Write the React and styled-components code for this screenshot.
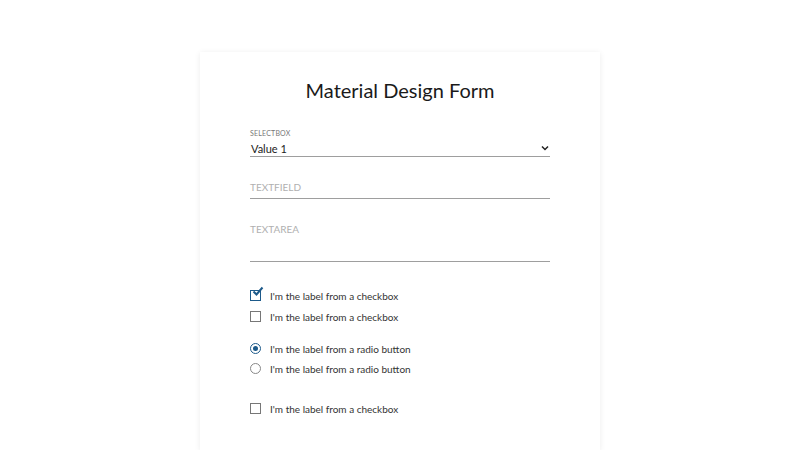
import React from 'react';
import styled, { createGlobalStyle } from 'styled-components';

const GlobalStyle = createGlobalStyle`
  html, body {
    margin: 0;
    padding: 0;
    background: #ffffff;
    font-family: Lato, "Open Sans", sans-serif;
    color: #222;
    overflow: hidden;
  }
`;

const Page = styled.div`
  display: flex;
  justify-content: center;
  padding-top: 52px;
  height: 450px;
  box-sizing: border-box;
`;

const Card = styled.form`
  width: 400px;
  padding: 20px 50px 40px;
  box-sizing: border-box;
  background: #fff;
  box-shadow: 0 1px 6px rgba(0, 0, 0, 0.08);
`;

const Title = styled.h1`
  margin: 0 0 20px;
  text-align: center;
  font-size: 20px;
  font-weight: 400;
  color: #1a1a1a;
  line-height: 36px;
`;

const Field = styled.div`
  display: flex;
  flex-direction: column;
  border-bottom: 1px solid #9e9e9e;
  margin-bottom: ${(p) => p.gap || 0}px;
`;

const SmallLabel = styled.span`
  font-size: 7px;
  color: #777;
  letter-spacing: 0.2px;
  line-height: 10px;
  margin-bottom: 3px;
`;

const SelectRow = styled.div`
  display: flex;
  align-items: center;
  justify-content: space-between;
  height: 14px;
  font-size: 11px;
  color: #222;
  padding: 0 1px 1px;
`;

const Placeholder = styled.span`
  font-size: 10px;
  color: #b0b0b0;
  line-height: 14px;
  height: ${(p) => p.h}px;
  padding-top: ${(p) => p.top}px;
`;

const Group = styled.div`
  display: flex;
  flex-direction: column;
  gap: ${(p) => p.inner || 7}px;
  margin-bottom: ${(p) => p.gap || 0}px;
`;

const Option = styled.label`
  display: flex;
  align-items: center;
  gap: 9px;
  font-size: 10px;
  color: #333;
  height: 13px;
`;

const Box = styled.span`
  position: relative;
  width: 9px;
  height: 9px;
  flex: none;
  border-style: solid;
  border-color: ${(p) => (p.checked ? '#1d5a8a' : '#777')};
  border-width: ${(p) => (p.checked ? '1.5px' : '1px')};
`;

const Tick = styled.svg`
  position: absolute;
  left: 1px;
  top: -5px;
`;

const Radio = styled.span`
  width: 9px;
  height: 9px;
  border-radius: 50%;
  border: 1px solid ${(p) => (p.checked ? '#1d5a8a' : '#888')};
  display: flex;
  align-items: center;
  justify-content: center;
  flex: none;
  &::after {
    content: '';
    width: 5px;
    height: 5px;
    border-radius: 50%;
    background: ${(p) => (p.checked ? '#1d5a8a' : 'transparent')};
  }
`;

const Checkbox = ({ checked, children }) => (
  <Option>
    <Box checked={checked}>
      {checked && (
        <Tick width="12" height="12" viewBox="0 0 12 12">
          <path d="M1.5 5.5 L4.5 8.5 L10.5 1.5" fill="none" stroke="#1d5a8a" strokeWidth="2" />
        </Tick>
      )}
    </Box>
    {children}
  </Option>
);

const RadioOption = ({ checked, children }) => (
  <Option>
    <Radio checked={checked} />
    {children}
  </Option>
);

export default function App() {
  return (
    <>
      <GlobalStyle />
      <Page>
        <Card>
          <Title>Material Design Form</Title>
          <Field gap={21}>
            <SmallLabel>SELECTBOX</SmallLabel>
            <SelectRow>
              <span>Value 1</span>
              <svg width="8" height="6" viewBox="0 0 8 6">
                <path d="M1 1.5 L4 4.5 L7 1.5" fill="none" stroke="#222" strokeWidth="1.5" />
              </svg>
            </SelectRow>
          </Field>
          <Field gap={20}>
            <Placeholder top={2} h={18}>TEXTFIELD</Placeholder>
          </Field>
          <Field gap={27}>
            <Placeholder top={3} h={39}>TEXTAREA</Placeholder>
          </Field>
          <Group gap={19} inner={8}>
            <Checkbox checked>I'm the label from a checkbox</Checkbox>
            <Checkbox>I'm the label from a checkbox</Checkbox>
          </Group>
          <Group gap={27} inner={7}>
            <RadioOption checked>I'm the label from a radio button</RadioOption>
            <RadioOption>I'm the label from a radio button</RadioOption>
          </Group>
          <Group>
            <Checkbox>I'm the label from a checkbox</Checkbox>
          </Group>
        </Card>
      </Page>
    </>
  );
}
